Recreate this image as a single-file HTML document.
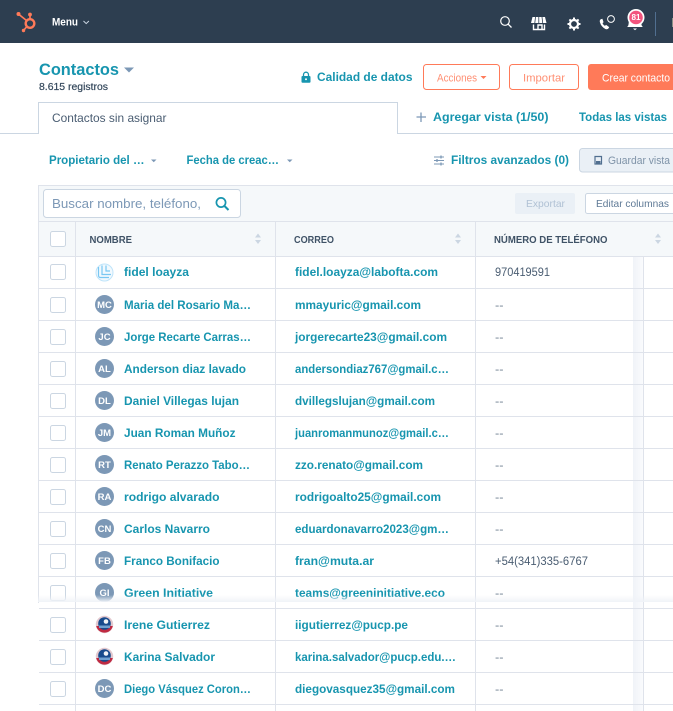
<!DOCTYPE html>
<html lang="es"><head><meta charset="utf-8"><title>Contactos</title>
<style>
html,body{margin:0;padding:0;background:#fff;width:673px;height:711px;overflow:hidden}
svg{display:block}
text{font-family:"Liberation Sans",sans-serif;white-space:pre}
.l{font-size:12px;font-weight:700;fill:#1795af}
.p{font-size:11.5px;fill:#4a5d72}
.d{font-size:11px;fill:#6b7c8e}
.h{font-size:10px;font-weight:700;fill:#3f5266}
.i{font-size:9.5px;fill:#fff;text-anchor:middle;font-weight:700}
.ln{stroke:#dfe3eb;stroke-width:1}
.cb{fill:#fff;stroke:#cbd6e2;stroke-width:1}
.a{fill:#7c98b6}
</style></head><body>
<svg width="673" height="711" viewBox="0 0 673 711" xmlns="http://www.w3.org/2000/svg">
<defs>
<linearGradient id="fade" x1="0" y1="0" x2="0" y2="1"><stop offset="0" stop-color="#f0f3f8" stop-opacity="0"/><stop offset="1" stop-color="#f0f3f8"/></linearGradient>
<linearGradient id="sh" x1="0" y1="0" x2="1" y2="0"><stop offset="0" stop-color="#f0f3f8"/><stop offset="1" stop-color="#fafbfd"/></linearGradient>
</defs>
<rect width="673" height="711" fill="#fff"/>
<!-- top nav -->
<rect width="673" height="43" fill="#2d3e50"/>
<g fill="none" stroke="#ff7a59">
<circle cx="30" cy="23.500" r="4.300" stroke-width="2.400"/>
<path d="M19 14.500L26.500 20.500M30 14.500V19M26.500 27L23.500 30.500" stroke-width="1.700"/>
</g>
<g fill="#ff7a59"><circle cx="18.500" cy="14" r="2"/><circle cx="30" cy="14.500" r="1.900"/><circle cx="23.500" cy="30.500" r="1.700"/></g>
<text x="52" y="25.500" textLength="26" lengthAdjust="spacingAndGlyphs" style="font-size:11px;font-weight:700;fill:#fff">Menu</text>
<path d="M83.500 21l2.700 2.600 2.700-2.600" fill="none" stroke="#cbd6e2" stroke-width="1"/>
<!-- search -->
<circle cx="505" cy="21" r="4.300" fill="none" stroke="#fff" stroke-width="1.200"/><path d="M508.200 24.200L511.500 27.500" stroke="#fff" stroke-width="1.300"/>
<!-- marketplace -->
<path d="M532.500 17h12.500l1.500 6h-15.500z" fill="#fff"/>
<path d="M535.500 17l-.7 6M538.800 17v6M542 17l.7 6" stroke="#2d3e50" stroke-width=".8"/>
<path d="M533.500 24.500V29.500H544.500V24.500M538 29V25H542V29" fill="none" stroke="#fff" stroke-width="1.400"/>
<!-- gear -->
<circle cx="574" cy="24" r="4" fill="none" stroke="#fff" stroke-width="2.200"/>
<path d="M574 17.500v2.500M574 28v2.500M567.500 24h2.500M578 24h2.500M569.400 19.400l1.800 1.800M576.800 26.800l1.800 1.800M569.400 28.600l1.800-1.800M576.800 21.200l1.800-1.800" stroke="#fff" stroke-width="2"/>
<!-- calling -->
<path d="M601 19.500c-.8.500-1.200 1.300-.8 2.600.8 3 2.700 5.300 5.300 6.600 1.200.5 2.300.2 2.900-.7l.4-.8-2.700-2-1.200 1c-1.200-.6-2.200-1.800-2.800-3.100l1.100-1-1-3z" fill="#fff" stroke="#fff" stroke-width=".6"/>
<circle cx="611" cy="19" r="3.400" fill="none" stroke="#fff" stroke-width="1"/>
<!-- bell + badge -->
<path d="M627 27c2-1 1.500-4 2-7h12c.5 3 0 6 2 7z" fill="#fff"/><path d="M633 28.500h4l-2 1.800z" fill="#fff"/>
<circle cx="636" cy="17.500" r="8.500" fill="#fff"/>
<circle cx="636" cy="17.500" r="6.800" fill="#f2547d"/>
<text x="631.500" y="20.200" textLength="9" lengthAdjust="spacingAndGlyphs" style="font-size:8px;font-weight:700;fill:#fff">81</text>
<path d="M655.500 12V36" stroke="#516f90" stroke-width="1"/>
<rect x="672" y="18" width="2" height="9" fill="#8a8f86"/>

<!-- title -->
<text x="39" y="75" textLength="80" lengthAdjust="spacingAndGlyphs" style="font-size:17px;font-weight:700;fill:#1795af">Contactos</text>
<path d="M124 67.500h10l-5 5z" fill="#7c98b6"/>
<text x="39" y="90" textLength="69" lengthAdjust="spacingAndGlyphs" style="font-size:10.500px;font-weight:400;fill:#33475b;stroke:#33475b;stroke-width:.2">8.615 registros</text>
<!-- lock -->
<rect x="301.500" y="76" width="9" height="6.800" rx="1" fill="#1795af"/>
<path d="M303.500 76.500v-1.800a2.500 2.500 0 0 1 5 0v1.800" fill="none" stroke="#1795af" stroke-width="1.300"/>
<circle cx="306" cy="79.300" r="1" fill="#fff"/>
<text x="317" y="81" textLength="95.500" lengthAdjust="spacingAndGlyphs" class="l">Calidad de datos</text>
<!-- buttons -->
<rect x="423.500" y="64.500" width="76" height="25" rx="3" fill="#fff" stroke="#ff7a59"/>
<text x="437" y="81.500" textLength="40" lengthAdjust="spacingAndGlyphs" style="font-size:11px;fill:#ff8f73">Acciones</text>
<path d="M480.500 76h6l-3 3z" fill="#ff7a59"/>
<rect x="509.500" y="64.500" width="69" height="25" rx="3" fill="#fff" stroke="#ff7a59"/>
<text x="523" y="81.500" textLength="42" lengthAdjust="spacingAndGlyphs" style="font-size:11px;fill:#ff8f73">Importar</text>
<rect x="588" y="64" width="90" height="26" rx="3" fill="#ff7a59"/>
<text x="602" y="81.500" textLength="68" lengthAdjust="spacingAndGlyphs" style="font-size:11px;fill:#fff">Crear contacto</text>
<!-- tabs -->
<path d="M0 133.500H38.500V102.500H397.500V133.500H673" fill="none" stroke="#cbd6e2"/>
<text x="52" y="122" textLength="114.500" lengthAdjust="spacingAndGlyphs" style="font-size:12px;fill:#4a5d72">Contactos sin asignar</text>
<path d="M421 112.500v9.500M416.500 117h9.500" stroke="#7c98b6" stroke-width="1.300"/>
<text x="433" y="121" textLength="115.500" lengthAdjust="spacingAndGlyphs" class="l">Agregar vista (1/50)</text>
<text x="579" y="121" textLength="88" lengthAdjust="spacingAndGlyphs" class="l">Todas las vistas</text>
<!-- filters -->
<text x="49" y="164" textLength="95.500" lengthAdjust="spacingAndGlyphs" class="l">Propietario del …</text>
<path d="M151 159.500h5.500l-2.750 2.700z" fill="#7c98b6"/>
<text x="186.500" y="164" textLength="92.500" lengthAdjust="spacingAndGlyphs" class="l">Fecha de creac…</text>
<path d="M287 159.500h5.500l-2.750 2.700z" fill="#7c98b6"/>
<path d="M434 157h10M434 160.500h10M434 164h10" stroke="#7c98b6" stroke-width="1"/>
<path d="M441 155.500v3M437 159v3M441 162.500v3" stroke="#7c98b6" stroke-width="1.300"/>
<text x="451" y="164" textLength="118" lengthAdjust="spacingAndGlyphs" class="l">Filtros avanzados (0)</text>
<rect x="579.500" y="148.500" width="100" height="23.500" rx="3" fill="#eaf0f6" stroke="#cbd6e2"/>
<path d="M595 156.500h6.500v7.500h-6.500z" fill="none" stroke="#516f90" stroke-width="1.200"/><path d="M596 161h4.500v3H596z" fill="#516f90"/>
<text x="608" y="164" textLength="62" lengthAdjust="spacingAndGlyphs" style="font-size:11px;fill:#7f93a8">Guardar vista</text>

<!-- toolbar -->
<rect x="38.500" y="185.500" width="640" height="71" fill="#f5f8fa" stroke="#dfe3eb"/>
<path d="M38.500 221.500H673" class="ln"/>
<rect x="43.500" y="189.500" width="197" height="28" rx="3" fill="#fff" stroke="#cbd6e2"/>
<text x="52" y="208" textLength="149" lengthAdjust="spacingAndGlyphs" style="font-size:13px;fill:#7c98b6">Buscar nombre, teléfono,</text>
<circle cx="221" cy="202.500" r="4.600" fill="none" stroke="#1795af" stroke-width="1.700"/><path d="M224.500 206l4 4" stroke="#1795af" stroke-width="2"/>
<rect x="515" y="193" width="60" height="21" rx="2" fill="#eaf0f6"/>
<text x="526" y="207" textLength="39" lengthAdjust="spacingAndGlyphs" style="font-size:10.500px;fill:#b0c1d4">Exportar</text>
<rect x="585.500" y="193.500" width="95" height="20" rx="2" fill="#fff" stroke="#cbd6e2"/>
<text x="596" y="207" textLength="73" lengthAdjust="spacingAndGlyphs" style="font-size:10.500px;fill:#5f7a96">Editar columnas</text>

<!-- sticky shadow -->
<rect x="633" y="257" width="10" height="454" fill="url(#sh)"/>
<!-- grid lines -->
<path class="ln" d="M38.500 185V603M75.500 222V711M275.500 222V711M475.500 222V711M643.500 257V711"/>
<path class="ln" d="M39 256.500H673M39 288.500H673M39 320.500H673M39 352.500H673M39 384.500H673M39 416.500H673M39 448.500H673M39 480.500H673M39 512.500H673M39 544.500H673M39 576.500H673M39 608.500H673M39 640.500H673M39 672.500H673M39 704.500H673"/>

<!-- header row -->
<rect class="cb" x="50.500" y="231.500" width="15" height="15" rx="2"/>
<text x="89.500" y="243" textLength="42.500" lengthAdjust="spacingAndGlyphs" class="h">NOMBRE</text>
<text x="294" y="243" textLength="40" lengthAdjust="spacingAndGlyphs" class="h">CORREO</text>
<text x="494" y="243" textLength="113.500" lengthAdjust="spacingAndGlyphs" class="h">NÚMERO DE TELÉFONO</text>
<g fill="#cbd6e2">
<path d="M255 237.500l3-4 3 4zM255 240l3 4 3-4z"/>
<path d="M455 237.500l3-4 3 4zM455 240l3 4 3-4z"/>
<path d="M655 237.500l3-4 3 4zM655 240l3 4 3-4z"/>
</g>

<!-- checkboxes -->
<g>
<rect class="cb" x="50.500" y="264.500" width="15" height="15" rx="2"/>
<rect class="cb" x="50.500" y="297.500" width="15" height="15" rx="2"/>
<rect class="cb" x="50.500" y="329.500" width="15" height="15" rx="2"/>
<rect class="cb" x="50.500" y="361.500" width="15" height="15" rx="2"/>
<rect class="cb" x="50.500" y="393.500" width="15" height="15" rx="2"/>
<rect class="cb" x="50.500" y="425.500" width="15" height="15" rx="2"/>
<rect class="cb" x="50.500" y="457.500" width="15" height="15" rx="2"/>
<rect class="cb" x="50.500" y="489.500" width="15" height="15" rx="2"/>
<rect class="cb" x="50.500" y="521.500" width="15" height="15" rx="2"/>
<rect class="cb" x="50.500" y="553.500" width="15" height="15" rx="2"/>
<rect class="cb" x="50.500" y="585.500" width="15" height="15" rx="2"/>
<rect class="cb" x="50.500" y="617.500" width="15" height="15" rx="2"/>
<rect class="cb" x="50.500" y="649.500" width="15" height="15" rx="2"/>
<rect class="cb" x="50.500" y="681.500" width="15" height="15" rx="2"/>
</g>

<!-- avatars -->
<circle cx="104.500" cy="272.500" r="8.500" fill="#f1f9fe" stroke="#bfe4fa" stroke-width="1"/>
<path d="M98.500 267v8.500a2 2 0 0 0 2 2h8.500M102 265.500v9h9M106 265.500v5.500h4" fill="none" stroke="#79c7f2" stroke-width="1.200"/>
<circle class="a" cx="104.500" cy="304.500" r="9.500"/><text class="i" x="104.500" y="308">MC</text>
<circle class="a" cx="104.500" cy="336.500" r="9.500"/><text class="i" x="104.500" y="340">JC</text>
<circle class="a" cx="104.500" cy="368.500" r="9.500"/><text class="i" x="104.500" y="372">AL</text>
<circle class="a" cx="104.500" cy="400.500" r="9.500"/><text class="i" x="104.500" y="404">DL</text>
<circle class="a" cx="104.500" cy="432.500" r="9.500"/><text class="i" x="104.500" y="436">JM</text>
<circle class="a" cx="104.500" cy="464.500" r="9.500"/><text class="i" x="104.500" y="468">RT</text>
<circle class="a" cx="104.500" cy="496.500" r="9.500"/><text class="i" x="104.500" y="500">RA</text>
<circle class="a" cx="104.500" cy="528.500" r="9.500"/><text class="i" x="104.500" y="532">CN</text>
<circle class="a" cx="104.500" cy="560.500" r="9.500"/><text class="i" x="104.500" y="564">FB</text>
<circle class="a" cx="104.500" cy="592.500" r="9.500"/><text class="i" x="104.500" y="596">GI</text>
<g>
<circle cx="104.500" cy="624.500" r="8.700" fill="#e3c9cf"/><path d="M96.200 626a8.500 8.500 0 0 0 16.600 0z" fill="#bf2a42"/><circle cx="104.500" cy="623.500" r="6.300" fill="#174a8c"/><circle cx="106" cy="621.500" r="2.300" fill="#f2f4f7"/><path d="M99 625.500h11v2.500h-11z" fill="#6fa0d0"/>
</g>
<g>
<circle cx="104.500" cy="656.500" r="8.700" fill="#e3c9cf"/><path d="M96.200 658a8.500 8.500 0 0 0 16.600 0z" fill="#bf2a42"/><circle cx="104.500" cy="655.500" r="6.300" fill="#174a8c"/><circle cx="106" cy="653.500" r="2.300" fill="#f2f4f7"/><path d="M99 657.500h11v2.500h-11z" fill="#6fa0d0"/>
</g>
<circle class="a" cx="104.500" cy="688.500" r="9.500"/><text class="i" x="104.500" y="692">DC</text>

<!-- names -->
<text class="l" x="124" y="276" textLength="65" lengthAdjust="spacingAndGlyphs">fidel loayza</text>
<text class="l" x="124" y="309" textLength="127" lengthAdjust="spacingAndGlyphs">Maria del Rosario Ma…</text>
<text class="l" x="124" y="341" textLength="127" lengthAdjust="spacingAndGlyphs">Jorge Recarte Carras…</text>
<text class="l" x="124" y="373" textLength="122" lengthAdjust="spacingAndGlyphs">Anderson diaz lavado</text>
<text class="l" x="124" y="405" textLength="115" lengthAdjust="spacingAndGlyphs">Daniel Villegas lujan</text>
<text class="l" x="124" y="437" textLength="111.500" lengthAdjust="spacingAndGlyphs">Juan Roman Muñoz</text>
<text class="l" x="124" y="469" textLength="126" lengthAdjust="spacingAndGlyphs">Renato Perazzo Tabo…</text>
<text class="l" x="124" y="501" textLength="95.500" lengthAdjust="spacingAndGlyphs">rodrigo alvarado</text>
<text class="l" x="124" y="533" textLength="86" lengthAdjust="spacingAndGlyphs">Carlos Navarro</text>
<text class="l" x="124" y="565" textLength="95.500" lengthAdjust="spacingAndGlyphs">Franco Bonifacio</text>
<text class="l" x="124" y="597" textLength="89" lengthAdjust="spacingAndGlyphs">Green Initiative</text>
<text class="l" x="124" y="629" textLength="86" lengthAdjust="spacingAndGlyphs">Irene Gutierrez</text>
<text class="l" x="124" y="661" textLength="91" lengthAdjust="spacingAndGlyphs">Karina Salvador</text>
<text class="l" x="124" y="693" textLength="127" lengthAdjust="spacingAndGlyphs">Diego Vásquez Coron…</text>

<!-- emails -->
<text class="l" x="295" y="276" textLength="143" lengthAdjust="spacingAndGlyphs">fidel.loayza@labofta.com</text>
<text class="l" x="295" y="309" textLength="126" lengthAdjust="spacingAndGlyphs">mmayuric@gmail.com</text>
<text class="l" x="295" y="341" textLength="152" lengthAdjust="spacingAndGlyphs">jorgerecarte23@gmail.com</text>
<text class="l" x="295" y="373" textLength="154" lengthAdjust="spacingAndGlyphs">andersondiaz767@gmail.c…</text>
<text class="l" x="295" y="405" textLength="140" lengthAdjust="spacingAndGlyphs">dvillegslujan@gmail.com</text>
<text class="l" x="295" y="437" textLength="154" lengthAdjust="spacingAndGlyphs">juanromanmunoz@gmail.c…</text>
<text class="l" x="295" y="469" textLength="128" lengthAdjust="spacingAndGlyphs">zzo.renato@gmail.com</text>
<text class="l" x="295" y="501" textLength="146" lengthAdjust="spacingAndGlyphs">rodrigoalto25@gmail.com</text>
<text class="l" x="295" y="533" textLength="154" lengthAdjust="spacingAndGlyphs">eduardonavarro2023@gm…</text>
<text class="l" x="295" y="565" textLength="79" lengthAdjust="spacingAndGlyphs">fran@muta.ar</text>
<text class="l" x="295" y="597" textLength="150" lengthAdjust="spacingAndGlyphs">teams@greeninitiative.eco</text>
<text class="l" x="295" y="629" textLength="113" lengthAdjust="spacingAndGlyphs">iigutierrez@pucp.pe</text>
<text class="l" x="295" y="661" textLength="161" lengthAdjust="spacingAndGlyphs">karina.salvador@pucp.edu.…</text>
<text class="l" x="295" y="693" textLength="160" lengthAdjust="spacingAndGlyphs">diegovasquez35@gmail.com</text>

<!-- phones -->
<text class="p" x="495" y="276" textLength="55" lengthAdjust="spacingAndGlyphs">970419591</text>
<text class="d" x="495" y="309" textLength="8.500" lengthAdjust="spacingAndGlyphs">--</text>
<text class="d" x="495" y="341" textLength="8.500" lengthAdjust="spacingAndGlyphs">--</text>
<text class="d" x="495" y="373" textLength="8.500" lengthAdjust="spacingAndGlyphs">--</text>
<text class="d" x="495" y="405" textLength="8.500" lengthAdjust="spacingAndGlyphs">--</text>
<text class="d" x="495" y="437" textLength="8.500" lengthAdjust="spacingAndGlyphs">--</text>
<text class="d" x="495" y="469" textLength="8.500" lengthAdjust="spacingAndGlyphs">--</text>
<text class="d" x="495" y="501" textLength="8.500" lengthAdjust="spacingAndGlyphs">--</text>
<text class="d" x="495" y="533" textLength="8.500" lengthAdjust="spacingAndGlyphs">--</text>
<text class="p" x="495" y="565" textLength="93" lengthAdjust="spacingAndGlyphs">+54(341)335-6767</text>
<text class="d" x="495" y="597" textLength="8.500" lengthAdjust="spacingAndGlyphs">--</text>
<text class="d" x="495" y="629" textLength="8.500" lengthAdjust="spacingAndGlyphs">--</text>
<text class="d" x="495" y="661" textLength="8.500" lengthAdjust="spacingAndGlyphs">--</text>
<text class="d" x="495" y="693" textLength="8.500" lengthAdjust="spacingAndGlyphs">--</text>

<!-- sticky fold fade -->
<rect x="38" y="595" width="635" height="7" fill="url(#fade)"/>
</svg>
</body></html>
